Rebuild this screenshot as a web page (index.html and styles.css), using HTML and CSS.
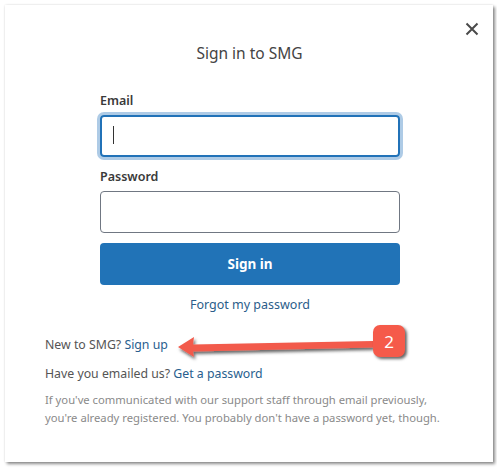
FILE: index.html
```html
<!DOCTYPE html>
<html lang="en">
<head>
<meta charset="utf-8">
<title>Sign in to SMG</title>
<link rel="stylesheet" href="styles.css">
</head>
<body>
<div class="page">
  <div class="card">
    <button class="close" aria-label="Close">
      <svg width="14" height="14" viewBox="0 0 14 14"><path d="M1.5 1.5 L12.5 12.5 M12.5 1.5 L1.5 12.5" stroke="#4a4a4a" stroke-width="2" fill="none"/></svg>
    </button>
    <h1 class="title">Sign in to SMG</h1>
    <form class="form">
      <label class="label">Email</label>
      <div class="input focused"><span class="caret"></span></div>
      <label class="label pw">Password</label>
      <div class="input"></div>
      <div class="btn">Sign in</div>
      <a class="forgot">Forgot my password</a>
    </form>
    <div class="extra">
      <p class="row first">New to SMG? <a class="link">Sign up</a></p>
      <p class="row second">Have you emailed us? <a class="link">Get a password</a></p>
      <p class="note">If you've communicated with our support staff through email previously, you're already registered. You probably don't have a password yet, though.</p>
    </div>
    <svg class="arrow" width="240" height="50" viewBox="0 0 240 50">
      <defs>
        <filter id="sh" x="-10%" y="-40%" width="130%" height="200%">
          <feDropShadow dx="1.5" dy="2.5" stdDeviation="1.8" flood-color="#000" flood-opacity="0.6"/>
        </filter>
      </defs>
      <path filter="url(#sh)" fill="#f25a4b" d="M5 26 L21 16 L20 23.5 L200 20 L200 26.5 L20 30.5 L21 36 Z"/>
    </svg>
    <div class="badge">2</div>
  </div>
</div>
</body>
</html>
```
FILE: styles.css
```css
* { box-sizing: border-box; }
html, body { margin: 0; padding: 0; background: #fff; }
body { font-family: "Noto Sans", "Open Sans", Arial, sans-serif; color: #444; }
.page { padding: 5px 4px 6px 5px; }
.card {
  position: relative;
  width: 488px;
  height: 457px;
  background: #fff;
  box-shadow: 2px 2px 3px rgba(0,0,0,0.45), 0 0 2px rgba(0,0,0,0.12);
  padding-top: 38px;
}
.close {
  position: absolute;
  top: 17px;
  right: 14px;
  border: 0;
  background: none;
  padding: 0;
  width: 14px;
  height: 14px;
  line-height: 0;
}
.title {
  margin: 0;
  text-align: center;
  font-weight: 400;
  font-size: 15.5px;
  line-height: 20px;
  color: #444;
  padding-left: 1px;
}
.form {
  width: 300px;
  margin: 29px auto 0;
  display: flex;
  flex-direction: column;
  transform: translateX(1px);
}
.label {
  font-size: 12.5px;
  font-weight: 600;
  line-height: 18px;
  color: #3a3a3a;
  margin-bottom: 5px;
}
.label.pw { margin-top: 11px; }
.input {
  height: 42px;
  border: 1px solid #707782;
  border-radius: 4px;
  position: relative;
}
.input.focused {
  border: 2px solid #2172b8;
  box-shadow: 0 0 0 3px #aecbe6;
}
.caret {
  position: absolute;
  left: 11px;
  top: 9px;
  width: 1px;
  height: 18px;
  background: #333;
}
.btn {
  margin-top: 10px;
  height: 42px;
  border-radius: 4px;
  background: #2173b7;
  color: #fff;
  font-weight: 700;
  font-size: 13.5px;
  display: flex;
  align-items: center;
  justify-content: center;
}
.forgot {
  margin-top: 11px;
  text-align: center;
  font-size: 12.5px;
  line-height: 18px;
  color: #2b5d8a;
}
.extra { padding-left: 40px; margin-top: 22px; }
.row {
  margin: 0;
  font-size: 12.3px;
  line-height: 18px;
  color: #555;
}
.row.second { margin-top: 11px; }
.link { color: #285e8e; }
.note {
  margin: 8px 0 0;
  font-size: 11.25px;
  line-height: 18px;
  color: #8a8a8a;
  width: 412px;
}
.arrow {
  position: absolute;
  left: 168px;
  top: 316px;
}
.badge {
  position: absolute;
  left: 368px;
  top: 320px;
  width: 32px;
  height: 32px;
  border-radius: 7px;
  background: #f55a4a;
  color: #fff;
  font-size: 17px;
  display: flex;
  align-items: center;
  justify-content: center;
  box-shadow: 2px 2px 3px rgba(0,0,0,0.6);
}
```
